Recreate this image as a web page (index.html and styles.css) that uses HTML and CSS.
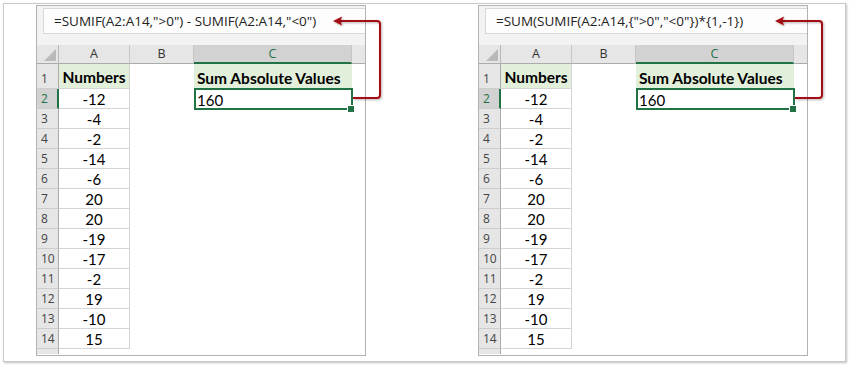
FILE: index.html
```html
<!DOCTYPE html>
<html lang="en">
<head>
  <meta charset="UTF-8">
  <title>Sum Absolute Values</title>
  <link rel="stylesheet" href="styles.css">
</head>
<body>
  <div class="frame">
    <div class="sheet">
      <div class="formula-bar">
        <div class="formula">=SUMIF(A2:A14,"&gt;0") - SUMIF(A2:A14,"&lt;0")</div>
      </div>
      <div class="grid">
        <div class="corner"><span class="tri"></span></div>
        <div class="col-head">A</div>
        <div class="col-head">B</div>
        <div class="col-head sel">C</div>
        <div class="col-head last"></div>

        <div class="rh">1</div><div class="num title">Numbers</div><div class="cell"></div><div class="cell title head-c">Sum Absolute Values</div><div class="cell"></div>
        <div class="rh sel">2</div><div class="num">-12</div><div class="cell"></div><div class="cell active">160</div><div class="cell"></div>
        <div class="rh">3</div><div class="num">-4</div><div class="cell"></div><div class="cell"></div><div class="cell"></div>
        <div class="rh">4</div><div class="num">-2</div><div class="cell"></div><div class="cell"></div><div class="cell"></div>
        <div class="rh">5</div><div class="num">-14</div><div class="cell"></div><div class="cell"></div><div class="cell"></div>
        <div class="rh">6</div><div class="num">-6</div><div class="cell"></div><div class="cell"></div><div class="cell"></div>
        <div class="rh">7</div><div class="num">20</div><div class="cell"></div><div class="cell"></div><div class="cell"></div>
        <div class="rh">8</div><div class="num">20</div><div class="cell"></div><div class="cell"></div><div class="cell"></div>
        <div class="rh">9</div><div class="num">-19</div><div class="cell"></div><div class="cell"></div><div class="cell"></div>
        <div class="rh">10</div><div class="num">-17</div><div class="cell"></div><div class="cell"></div><div class="cell"></div>
        <div class="rh">11</div><div class="num">-2</div><div class="cell"></div><div class="cell"></div><div class="cell"></div>
        <div class="rh">12</div><div class="num">19</div><div class="cell"></div><div class="cell"></div><div class="cell"></div>
        <div class="rh">13</div><div class="num">-10</div><div class="cell"></div><div class="cell"></div><div class="cell"></div>
        <div class="rh">14</div><div class="num">15</div><div class="cell"></div><div class="cell"></div><div class="cell"></div>
        <div class="rh end"></div>
      </div>
    </div>

    <div class="sheet">
      <div class="formula-bar">
        <div class="formula">=SUM(SUMIF(A2:A14,{"&gt;0","&lt;0"})*{1,-1})</div>
      </div>
      <div class="grid">
        <div class="corner"><span class="tri"></span></div>
        <div class="col-head">A</div>
        <div class="col-head">B</div>
        <div class="col-head sel">C</div>
        <div class="col-head last"></div>

        <div class="rh">1</div><div class="num title">Numbers</div><div class="cell"></div><div class="cell title head-c">Sum Absolute Values</div><div class="cell"></div>
        <div class="rh sel">2</div><div class="num">-12</div><div class="cell"></div><div class="cell active">160</div><div class="cell"></div>
        <div class="rh">3</div><div class="num">-4</div><div class="cell"></div><div class="cell"></div><div class="cell"></div>
        <div class="rh">4</div><div class="num">-2</div><div class="cell"></div><div class="cell"></div><div class="cell"></div>
        <div class="rh">5</div><div class="num">-14</div><div class="cell"></div><div class="cell"></div><div class="cell"></div>
        <div class="rh">6</div><div class="num">-6</div><div class="cell"></div><div class="cell"></div><div class="cell"></div>
        <div class="rh">7</div><div class="num">20</div><div class="cell"></div><div class="cell"></div><div class="cell"></div>
        <div class="rh">8</div><div class="num">20</div><div class="cell"></div><div class="cell"></div><div class="cell"></div>
        <div class="rh">9</div><div class="num">-19</div><div class="cell"></div><div class="cell"></div><div class="cell"></div>
        <div class="rh">10</div><div class="num">-17</div><div class="cell"></div><div class="cell"></div><div class="cell"></div>
        <div class="rh">11</div><div class="num">-2</div><div class="cell"></div><div class="cell"></div><div class="cell"></div>
        <div class="rh">12</div><div class="num">19</div><div class="cell"></div><div class="cell"></div><div class="cell"></div>
        <div class="rh">13</div><div class="num">-10</div><div class="cell"></div><div class="cell"></div><div class="cell"></div>
        <div class="rh">14</div><div class="num">15</div><div class="cell"></div><div class="cell"></div><div class="cell"></div>
        <div class="rh end"></div>
      </div>
    </div>

    <!-- arrows from C2 back to the formula -->
    <svg class="arrows" width="850" height="365" viewBox="0 0 850 365">
      <defs>
        <filter id="sh" x="-20%" y="-20%" width="140%" height="140%">
          <feDropShadow dx="1" dy="1" stdDeviation="0.8" flood-color="#000" flood-opacity="0.3"/>
        </filter>
      </defs>
      <g fill="none" stroke="#a50d12" stroke-width="2" filter="url(#sh)">
        <path d="M353 98 H377 Q380 98 380 95 V24 Q380 21 377 21 H340"/>
        <path d="M795 98 H819 Q822 98 822 95 V24 Q822 21 819 21 H782"/>
      </g>
      <g fill="#a50d12" filter="url(#sh)">
        <path d="M333 21 L342 16.5 L340.5 21 L342 25.5 Z"/>
        <path d="M775 21 L784 16.5 L782.5 21 L784 25.5 Z"/>
      </g>
    </svg>
  </div>
</body>
</html>
```

FILE: styles.css
```css
* {
  box-sizing: border-box;
  margin: 0;
  padding: 0;
}

body {
  background: #ffffff;
  width: 850px;
  height: 365px;
  overflow: hidden;
}

.frame {
  margin: 3px 0 0 3px;
  width: 843px;
  height: 359px;
  border: 1px solid #c9c9c9;
  box-shadow: 1px 1px 2px rgba(0, 0, 0, 0.25);
  display: flex;
  gap: 112px;
  padding: 1px 0 0 32px;
}

.sheet {
  width: 330px;
  height: 351px;
  border: 1px solid #b2b2b2;
  background: #ffffff;
  display: flex;
  flex-direction: column;
  overflow: hidden;
}

.formula-bar {
  height: 39px;
  background: #f3f3f3;
  padding: 2px 0 0 6px;
}

.formula {
  height: 26px;
  background: #fdfdfd;
  border: 1px solid #d8d8d8;
  border-right: none;
  padding-left: 10px;
  font-family: "Open Sans", sans-serif;
  font-size: 13.5px;
  line-height: 24px;
  color: #222;
  white-space: nowrap;
}

.grid {
  display: grid;
  grid-template-columns: 22px 71px 64px 158px 13px;
  grid-template-rows: 19px 25px repeat(13, 20px) 5px;
  font-family: Lato, sans-serif;
  font-size: 15px;
  color: #000;
}

.corner {
  position: relative;
  background: #e6e6e6;
  border-right: 1px solid #b8b8b8;
  border-bottom: 1px solid #ababab;
}

.tri {
  position: absolute;
  right: 2px;
  bottom: 2px;
  width: 0;
  height: 0;
  border-left: 12px solid transparent;
  border-bottom: 12px solid #b9b9b9;
}

.col-head {
  background: #e6e6e6;
  border-right: 1px solid #c6c6c6;
  border-bottom: 1px solid #ababab;
  font-family: "Open Sans", sans-serif;
  font-size: 12.5px;
  color: #333;
  text-align: center;
  line-height: 18px;
}

.col-head.sel {
  background: #d2d2d2;
  color: #217346;
  border-bottom: 2px solid #217346;
}

.col-head.last {
  border-right: none;
}

.rh {
  background: #e6e6e6;
  border-right: 1px solid #ababab;
  border-bottom: 1px solid #cdcdcd;
  font-family: "Open Sans", sans-serif;
  font-size: 12px;
  color: #444;
  padding-left: 4px;
  display: flex;
  align-items: flex-end;
  line-height: 18px;
}

.rh.sel {
  background: #d2d2d2;
  color: #217346;
  border-right: 2px solid #217346;
}

.rh.end {
  border-bottom: none;
}

.num {
  border-right: 1px solid #d4d4d4;
  border-bottom: 1px solid #d4d4d4;
  text-align: center;
  display: flex;
  align-items: flex-end;
  justify-content: center;
  line-height: 17px;
}

.title {
  background: #e2efda;
  font-size: 15.5px;
  font-weight: bold;
  line-height: 21px;
}

.cell {
  position: relative;
  display: flex;
  align-items: flex-end;
  padding-left: 3px;
  line-height: 17px;
}

.cell.title {
  line-height: 21px;
}

.active::after {
  content: "";
  position: absolute;
  left: 0;
  top: -1px;
  right: -1px;
  bottom: -1px;
  border: 2px solid #217346;
}

.active::before {
  content: "";
  position: absolute;
  right: -3px;
  bottom: -4px;
  width: 6px;
  height: 6px;
  background: #217346;
  border: 1px solid #ffffff;
  z-index: 1;
}

.arrows {
  position: absolute;
  left: 0;
  top: 0;
  pointer-events: none;
}
```
